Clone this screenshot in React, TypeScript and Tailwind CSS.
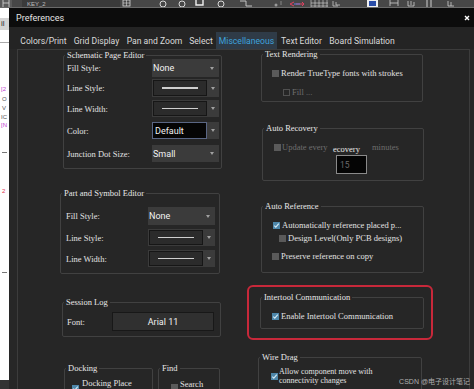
import React from "react";

const serif = "font-['Liberation_Serif',serif]";
const sans = "font-['Roboto','Noto_Sans',sans-serif]";

function Arrow() {
  return (
    <svg width="4" height="3" viewBox="0 0 4 3" className="shrink-0">
      <path d="M0 0H4L2 3Z" fill="#a0a0a0" />
    </svg>
  );
}

function Group({
  title,
  className = "",
  children,
}: {
  title: string;
  className?: string;
  children?: React.ReactNode;
}) {
  return (
    <div className={`relative border border-[#414141] rounded-[2px] shrink-0 ${className}`}>
      <span className="absolute -top-[6px] left-[1px] px-[2px] bg-[#262626] text-[#e8e8e8] text-[8.5px] leading-[10px] whitespace-nowrap">
        {title}
      </span>
      {children}
    </div>
  );
}

function Box({ kind, className = "" }: { kind: "on" | "grey" | "off"; className?: string }) {
  if (kind === "on")
    return (
      <span className={`w-[7px] h-[7px] bg-[#4d86a9] shrink-0 flex items-center justify-center ${className}`}>
        <svg width="7" height="7" viewBox="0 0 7 7">
          <path d="M1.3 3.6L2.8 5.1L5.8 1.6" stroke="#d6eaf5" strokeWidth="1.1" fill="none" />
        </svg>
      </span>
    );
  if (kind === "grey") return <span className={`w-[7px] h-[7px] bg-[#5a5a5a] shrink-0 ${className}`} />;
  return <span className={`w-[7px] h-[7px] border border-[#505050] shrink-0 ${className}`} />;
}

function CheckRow({
  kind,
  label,
  className = "",
  dim = false,
}: {
  kind: "on" | "grey" | "off";
  label: React.ReactNode;
  className?: string;
  dim?: boolean;
}) {
  return (
    <div className={`flex items-center gap-[2px] h-[10px] ${className}`}>
      <Box kind={kind} />
      <span className={`text-[8.5px] leading-[10px] whitespace-nowrap ${dim ? "text-[#6e6e6e]" : "text-[#e2e2e2]"}`}>
        {label}
      </span>
    </div>
  );
}

function TextSelect({ value }: { value: string }) {
  return (
    <div className="w-full h-full bg-[#3b3b3b] flex items-center justify-between pl-[1px] pr-[5px]">
      <span className={`${sans} text-[9px] leading-[10px] text-[#f2f2f2]`}>{value}</span>
      <Arrow />
    </div>
  );
}

function LineSelect({ inner }: { inner: number }) {
  return (
    <div className="w-full h-full bg-[#3b3b3b] flex p-[1px]">
      <div
        className="h-full border border-[#161616] bg-[#2b2b2b] flex items-center justify-center shrink-0"
        style={{ width: inner }}
      >
        <div className="w-[70%] h-[1.5px] bg-[#cfcfcf]" />
      </div>
      <div className="flex-1 flex items-center justify-center">
        <Arrow />
      </div>
    </div>
  );
}

function ColorSelect() {
  return (
    <div className="w-full h-full bg-[#3b3b3b] flex">
      <div className="w-[55px] h-full border border-[#5a6684] bg-[#050505] flex items-center pl-[2px]">
        <span className={`${sans} text-[9px] leading-[10px] text-[#f2f2f2]`}>Default</span>
      </div>
      <div className="flex-1 flex items-center justify-center">
        <Arrow />
      </div>
    </div>
  );
}

function Row({
  label,
  className = "",
  children,
  selW = 67,
}: {
  label: string;
  className?: string;
  children: React.ReactNode;
  selW?: number;
}) {
  return (
    <div className={`flex items-center ${className}`}>
      <span className="flex-1 text-[8.5px] leading-[10px] text-[#e2e2e2] whitespace-nowrap">{label}</span>
      <div className="h-full shrink-0" style={{ width: selW }}>
        {children}
      </div>
    </div>
  );
}

function TopToolbar() {
  return (
    <div className="h-[8px] bg-[#474747] flex items-center overflow-hidden relative shrink-0">
      <svg width="474" height="8" viewBox="0 0 474 8" className="absolute left-0 top-0">
        <rect x="0" y="0" width="12" height="8" fill="#5a5a5a" />
        <path d="M3 0V7M3 3H9M9 0V7" stroke="#d8d8d8" strokeWidth="0.8" fill="none" />
        <rect x="22" y="0" width="98" height="7" fill="#3a3a3a" />
        <text x="27" y="6" fontSize="6" fill="#bdbdbd" fontFamily="Liberation Sans">KEY_2</text>
        <rect x="123" y="0" width="7" height="6" stroke="#d8d8d8" strokeWidth="0.8" fill="none" />
        <path d="M123 3H130M126.5 0V6" stroke="#d8d8d8" strokeWidth="0.6" />
        <circle cx="163" cy="4" r="3" stroke="#e8e8e8" strokeWidth="0.9" fill="none" />
        <circle cx="182" cy="4" r="3" stroke="#e8e8e8" strokeWidth="0.9" fill="none" />
        <path d="M196 0V5H203V0" stroke="#f0f0f0" strokeWidth="1.4" fill="none" />
        <circle cx="221" cy="4" r="3" stroke="#e8e8e8" strokeWidth="0.9" fill="none" />
        <path d="M240 1H246V6H252" stroke="#d0d0d0" strokeWidth="0.9" fill="none" />
        <circle cx="276" cy="5" r="1.5" fill="#9a9a9a" />
        <path d="M281 1V5" stroke="#9a9a9a" strokeWidth="0.8" />
        <path d="M290 4L294 2M294 6L290 4M296 4H304M302 2L304 4L302 6" stroke="#e04060" strokeWidth="1" fill="none" />
        <path d="M294 4H300" stroke="#6080e0" strokeWidth="1" />
        <path d="M311 0V7M315 0V7M319 0V7M323 0V7M327 0V7M311 3H328M311 6H328" stroke="#d8d8d8" strokeWidth="0.6" />
        <path d="M333 1V6H338M336 2V5H340" stroke="#c8c8c8" strokeWidth="0.8" fill="none" />
        <rect x="367" y="0" width="11" height="7" fill="#f0f0f0" />
        <rect x="369" y="1" width="7" height="5" fill="#2a4da8" />
        <path d="M390 0V6M390 3H398M398 0V6" stroke="#d0d0d0" strokeWidth="0.8" fill="none" />
        <path d="M408 1V6H414V2M411 1V5" stroke="#d0d0d0" strokeWidth="0.8" fill="none" />
        <path d="M427 0V7M431 0V7" stroke="#d0d0d0" strokeWidth="1" />
        <path d="M448 1V6H454M451 2V6" stroke="#d0d0d0" strokeWidth="0.8" fill="none" />
      </svg>
      <div className="absolute left-0 right-0 bottom-0 h-[1px] bg-[#6a6a6a]" />
    </div>
  );
}

function LeftStrip() {
  return (
    <div className="w-[9px] bg-white relative shrink-0 overflow-hidden">
      <div className="absolute left-0 top-[10px] w-[9px] h-[12px] bg-[#d4d4d4]">
        <span className="absolute left-[1px] top-[1px] text-[8px] leading-[9px] text-[#333] font-['Liberation_Sans',sans-serif]">il</span>
      </div>
      <div className="absolute left-0 top-[34px] w-[9px] h-[1px] bg-[#aaaaaa]" />
      <span className="absolute left-[1px] top-[78px] text-[6px] leading-[7px] text-[#c040d0] font-['Liberation_Sans',sans-serif]">[2</span>
      <span className="absolute left-[2px] top-[88px] text-[6px] leading-[7px] text-[#555] font-['Liberation_Sans',sans-serif]">O</span>
      <span className="absolute left-[2px] top-[97px] text-[6px] leading-[7px] text-[#555] font-['Liberation_Sans',sans-serif]">V</span>
      <span className="absolute left-[1px] top-[106px] text-[6px] leading-[7px] text-[#555] font-['Liberation_Sans',sans-serif]">IC</span>
      <span className="absolute left-[1px] top-[114px] text-[6px] leading-[7px] text-[#c040d0] font-['Liberation_Sans',sans-serif]">[N</span>
      <div className="absolute left-[2px] top-[144px] w-[5px] h-[1px] bg-[#777]" />
      <span className="absolute left-[2px] top-[180px] text-[6px] leading-[7px] text-[#e03050] font-['Liberation_Sans',sans-serif]">2</span>
      <div className="absolute left-[2px] top-[264px] w-[5px] h-[1px] bg-[#777]" />
      <div className="absolute left-0 top-[372px] w-[9px] h-[12px] bg-[#333]" />
    </div>
  );
}

const tabs: { label: string; w: number; sel?: boolean }[] = [
  { label: "Colors/Print", w: 53 },
  { label: "Grid Display", w: 53 },
  { label: "Pan and Zoom", w: 63 },
  { label: "Select", w: 30 },
  { label: "Miscellaneous", w: 61, sel: true },
  { label: "Text Editor", w: 49 },
  { label: "Board Simulation", w: 72 },
];

export default function App() {
  return (
    <div className={`w-[474px] h-[389px] overflow-hidden relative bg-white flex flex-col ${serif}`}>
      <TopToolbar />
      <div className="flex flex-1 min-h-0">
        <LeftStrip />
        <div className="flex-1 flex flex-col bg-[#272727] min-w-0">
          {/* title bar */}
          <div className="h-[19px] bg-[#0c0c0c] flex items-center justify-between pl-[7px] pr-[4px] shrink-0">
            <span className={`${sans} text-[9px] leading-[10px] text-[#e4e4e4]`}>Preferences</span>
            <svg width="6" height="6" viewBox="0 0 6 6">
              <path d="M1 1L5 5M5 1L1 5" stroke="#ffffff" strokeWidth="1.4" />
            </svg>
          </div>
          {/* tabs */}
          <div className="h-[22px] flex items-end pl-[8px] shrink-0 bg-[#242424]">
            {tabs.map((t) => (
              <div
                key={t.label}
                className={`h-[17px] flex items-center justify-center shrink-0 ${t.sel ? "bg-[#2f3b47]" : ""}`}
                style={{ width: t.w }}
              >
                <span
                  className={`${sans} text-[8.6px] leading-[10px] whitespace-nowrap ${
                    t.sel ? "text-[#3ea2dc]" : "text-[#dadada]"
                  }`}
                >
                  {t.label}
                </span>
              </div>
            ))}
          </div>
          {/* panel */}
          <div className="flex-1 min-h-0 ml-[8px] mr-[4px] border-l border-t border-r border-[#3c3c3c] bg-[#262626] flex overflow-hidden">
            {/* left column */}
            <div className="w-[162px] ml-[42px] flex flex-col shrink-0">
              <Group title="Schematic Page Editor" className="mt-[5px] ml-[3px] h-[114px] pl-[3px] pr-[2px] flex flex-col">
                <Row label="Fill Style:" className="mt-[3px] h-[18px]">
                  <TextSelect value="None" />
                </Row>
                <Row label="Line Style:" className="mt-[2px] h-[18px]">
                  <LineSelect inner={54} />
                </Row>
                <Row label="Line Width:" className="mt-[3px] h-[17px]">
                  <LineSelect inner={54} />
                </Row>
                <Row label="Color:" className="mt-[5px] h-[17px]">
                  <ColorSelect />
                </Row>
                <Row label="Junction Dot Size:" className="mt-[6px] h-[17px]">
                  <TextSelect value="Small" />
                </Row>
              </Group>

              <Group title="Part and Symbol Editor" className="mt-[24px] mr-[2px] h-[81px] pl-[5px] pr-[4px] flex flex-col">
                <Row label="Fill Style:" className="mt-[13px] h-[18px]">
                  <TextSelect value="None" />
                </Row>
                <Row label="Line Style:" className="mt-[4px] h-[17px]">
                  <LineSelect inner={54} />
                </Row>
                <Row label="Line Width:" className="mt-[4px] h-[17px]">
                  <LineSelect inner={54} />
                </Row>
              </Group>

              <Group title="Session Log" className="mt-[28px] ml-[2px] mr-[1px] h-[35px] pl-[4px] pr-[6px] flex flex-col">
                <Row label="Font:" className="mt-[9px] h-[19px]" selW={102}>
                  <div className="w-full h-full bg-[#303030] border border-[#181818] flex items-center justify-center">
                    <span className={`${sans} text-[9px] leading-[10px] text-[#f0f0f0]`}>Arial 11</span>
                  </div>
                </Row>
              </Group>

              <div className="flex mt-[31px] shrink-0">
                <Group title="Docking" className="ml-[4px] w-[89px] h-[40px] pl-[7px]">
                  <div className="flex items-start gap-[3px] mt-[9px]">
                    <Box kind="on" className="mt-[7px]" />
                    <span className="text-[8.5px] leading-[10px] text-[#e2e2e2] whitespace-nowrap">
                      Docking Place
                    </span>
                  </div>
                </Group>
                <Group title="Find" className="ml-[5px] w-[62px] h-[40px] pl-[12px]">
                  <div className="flex items-start gap-[2px] mt-[10px]">
                    <Box kind="grey" className="mt-[5px]" />
                    <span className="text-[8.5px] leading-[10px] text-[#e2e2e2] whitespace-nowrap">Search</span>
                  </div>
                </Group>
              </div>
            </div>

            {/* right column */}
            <div className="w-[166px] ml-[36px] flex flex-col shrink-0">
              <Group title="Text Rendering" className="mt-[4px] ml-[3px] mr-[1px] h-[48px] flex flex-col">
                <CheckRow kind="grey" label="Render TrueType fonts with strokes" className="mt-[13px] ml-[10px]" />
                <CheckRow kind="off" label="Fill ..." dim className="mt-[9px] ml-[21px]" />
              </Group>

              <Group title="Auto Recovery" className="mt-[26px] ml-[4px] h-[53px] flex flex-col">
                <div className="flex items-center h-[10px] mt-[13px] ml-[11px]">
                  <Box kind="grey" />
                  <span className="ml-[1px] w-[51px] shrink-0 text-[8.5px] leading-[10px] text-[#6e6e6e] whitespace-nowrap">
                    Update every
                  </span>
                  <span className="w-[39px] shrink-0 text-[8.5px] leading-[10px] text-[#e8e8e8] whitespace-nowrap relative top-[2px]">
                    ecovery
                  </span>
                  <span className="text-[8.5px] leading-[10px] text-[#6e6e6e] whitespace-nowrap">minutes</span>
                </div>
                <div className="ml-[73px] mt-[3px] w-[31px] h-[19px] bg-[#050505] border border-[#8a8a8a] flex items-center pl-[3px]">
                  <span className={`${sans} text-[8.5px] leading-[10px] text-[#6a6a6a]`}>15</span>
                </div>
              </Group>

              <Group title="Auto Reference" className="mt-[25px] ml-[3px] h-[67px] flex flex-col">
                <CheckRow kind="on" label="Automatically reference placed p..." className="mt-[13px] ml-[11px]" />
                <CheckRow kind="grey" label="Design Level(Only PCB designs)" className="mt-[3px] ml-[17px]" />
                <CheckRow kind="grey" label="Preserve reference on copy" className="mt-[8px] ml-[10px]" />
              </Group>

              <div className="mt-[12px] -ml-[11px] -mr-[9px] h-[55px] border-2 border-[#c8283a] rounded-[6px] pt-[10px] pl-[11px] pr-[7px] shrink-0">
                <Group title="Intertool Communication" className="h-[32px] flex flex-col">
                  <CheckRow kind="on" label="Enable Intertool Communication" className="mt-[13px] ml-[11px]" />
                </Group>
              </div>

              <Group title="Wire Drag" className="mt-[17px] mr-[2px] h-[40px]">
                <div className="flex items-center gap-[1px] mt-[10px] ml-[12px]">
                  <Box kind="on" />
                  <div className="flex flex-col">
                    <span className="text-[8px] leading-[8.5px] text-[#e2e2e2] whitespace-nowrap">
                      Allow component move with
                    </span>
                    <span className="text-[8px] leading-[8.5px] text-[#e2e2e2] whitespace-nowrap">
                      connectivity changes
                    </span>
                  </div>
                </div>
              </Group>
            </div>
          </div>
        </div>
      </div>
      <span className="absolute right-[4px] bottom-[3px] text-[7px] leading-[8px] text-[#cfcfcf] opacity-80 font-['Liberation_Sans','Noto_Sans_CJK_SC',sans-serif]">
        CSDN @电子设计笔记
      </span>
    </div>
  );
}
